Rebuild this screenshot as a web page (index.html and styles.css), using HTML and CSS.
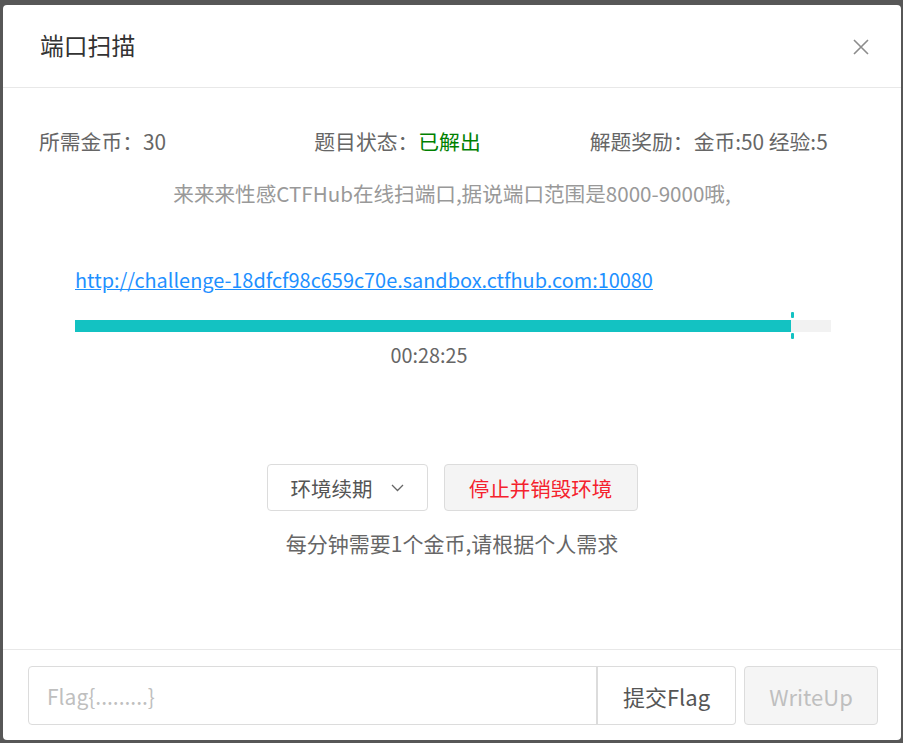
FILE: index.html
```html
<!DOCTYPE html>
<html lang="zh-CN">
<head>
    <meta charset="UTF-8">
    <meta name="viewport" content="width=device-width, initial-scale=1.0">
    <title>端口扫描</title>
    <link rel="stylesheet" href="styles.css">
</head>
<body>
    <div class="modal">
        <div class="modal-header">
            <h2 class="modal-title">端口扫描</h2>
            <span class="modal-close">
                <svg width="18" height="18" viewBox="0 0 18 18">
                    <path d="M2 2 L16 16 M16 2 L2 16" stroke="#8c8c8c" stroke-width="1.6" fill="none"/>
                </svg>
            </span>
        </div>

        <div class="modal-body">
            <div class="info">
                <div class="info-item"><span class="label">所需金币：</span>30</div>
                <div class="info-item"><span class="label">题目状态：</span><span class="solved">已解出</span></div>
                <div class="info-item"><span class="label">解题奖励：</span>金币:50 经验:5</div>
            </div>
            <p class="desc">来来来性感CTFHub在线扫端口,据说端口范围是8000-9000哦,</p>

            <div class="env">
                <a class="env-link" href="#">http://challenge-18dfcf98c659c70e.sandbox.ctfhub.com:10080</a>
                <div class="progress">
                    <div class="progress-bar">
                        <div class="progress-fill" style="width: 94.7%"></div>
                    </div>
                    <span class="progress-mark mark-top" style="left: 94.7%"></span>
                    <span class="progress-mark mark-bottom" style="left: 94.7%"></span>
                </div>
                <div class="timer">00:28:25</div>
            </div>

            <div class="actions">
                <button class="btn btn-renew">环境续期
                    <svg width="13" height="8" viewBox="0 0 13 8">
                        <polyline points="1,1 6.5,6.5 12,1" stroke="#666" stroke-width="1.3" fill="none"/>
                    </svg>
                </button>
                <button class="btn btn-stop">停止并销毁环境</button>
            </div>
            <p class="note">每分钟需要1个金币,请根据个人需求</p>
        </div>

        <div class="modal-footer">
            <div class="flag-group">
                <input class="flag-input" type="text" placeholder="Flag{.........}">
                <button class="btn-submit">提交Flag</button>
            </div>
            <button class="btn-writeup" disabled>WriteUp</button>
        </div>
    </div>
</body>
</html>
```

FILE: styles.css
```css
* { margin: 0; padding: 0; box-sizing: border-box; }
body {
    background-color: #575757;
    font-family: "Noto Sans CJK SC", "Noto Sans", sans-serif;
    color: #666;
}
.modal {
    width: 898px;
    height: 735px;
    margin: 5px 0 0 3px;
    background-color: #fff;
    border-radius: 4px;
    display: flex;
    flex-direction: column;
}
.modal-header {
    height: 83px;
    padding: 0 31px 0 37px;
    border-bottom: 1px solid #e8e8e8;
    display: flex;
    align-items: center;
    justify-content: space-between;
}
.modal-title {
    font-size: 23.8px;
    font-weight: normal;
    color: #333;
    line-height: 30px;
    margin-top: -2px;
}
.modal-close {
    display: flex;
    margin-top: 2px;
    cursor: pointer;
}
.modal-body {
    flex: 1;
}
.info {
    display: grid;
    grid-template-columns: repeat(3, 1fr);
    padding: 0 36px;
    margin-top: 39px;
    font-size: 20.8px;
    line-height: 28px;
}
.info .label {
    color: #666;
}
.info .solved {
    color: #008000;
}
.desc {
    margin-top: 24px;
    text-align: center;
    font-size: 20.6px;
    line-height: 28px;
    color: #999;
}
.env {
    padding: 0 70px 0 72px;
    margin-top: 59px;
}
.env-link {
    display: block;
    font-size: 19.9px;
    line-height: 28px;
    color: #1e90ff;
    text-decoration: underline;
}
.progress {
    position: relative;
    height: 27px;
    margin-top: 18px;
    display: flex;
    align-items: center;
}
.progress-bar {
    width: 100%;
    height: 12px;
    background-color: #f2f2f2;
}
.progress-fill {
    height: 100%;
    background-color: #13c2c2;
}
.progress-mark {
    position: absolute;
    width: 3px;
    height: 6px;
    background-color: #13c2c2;
    border-radius: 1px;
}
.mark-top { top: 0; }
.mark-bottom { bottom: 0; }
.timer {
    margin-top: 2px;
    padding-right: 48px;
    text-align: center;
    font-size: 19.8px;
    line-height: 28px;
    color: #666;
}
.actions {
    margin-top: 95px;
    display: flex;
    justify-content: center;
    gap: 16px;
}
.btn {
    height: 47px;
    border: 1px solid #dcdcdc;
    border-radius: 4px;
    background-color: #fff;
    font-family: inherit;
    font-size: 20.5px;
    cursor: pointer;
}
.btn-renew {
    width: 161px;
    color: #555;
    display: flex;
    align-items: center;
    justify-content: center;
    gap: 18px;
}
.btn-stop {
    width: 194px;
    background-color: #f4f4f4;
    color: #f5222d;
}
.note {
    margin-top: 18px;
    text-align: center;
    font-size: 21px;
    line-height: 28px;
    color: #666;
}
.modal-footer {
    height: 91px;
    border-top: 1px solid #e8e8e8;
    padding: 16px 23px 0 25px;
    display: flex;
    align-items: flex-start;
    gap: 8px;
}
.flag-group {
    display: flex;
    height: 59px;
    flex: 1;
}
.flag-input {
    flex: 1;
    height: 100%;
    border: 1px solid #dcdcdc;
    border-radius: 4px 0 0 4px;
    padding: 0 18px;
    font-family: inherit;
    font-size: 21px;
    color: #666;
    outline: none;
}
.flag-input::placeholder {
    color: #bfbfbf;
}
.btn-submit {
    width: 140px;
    height: 100%;
    border: 1px solid #dcdcdc;
    border-left: 2px solid #dcdcdc;
    margin-left: -1px;
    border-radius: 0 4px 4px 0;
    background-color: #fff;
    font-family: inherit;
    font-size: 22px;
    color: #555;
    cursor: pointer;
}
.btn-writeup {
    width: 134px;
    height: 59px;
    border: 1px solid #dcdcdc;
    border-radius: 4px;
    background-color: #f5f5f5;
    font-family: inherit;
    font-size: 22px;
    color: #bfbfbf;
}
```
